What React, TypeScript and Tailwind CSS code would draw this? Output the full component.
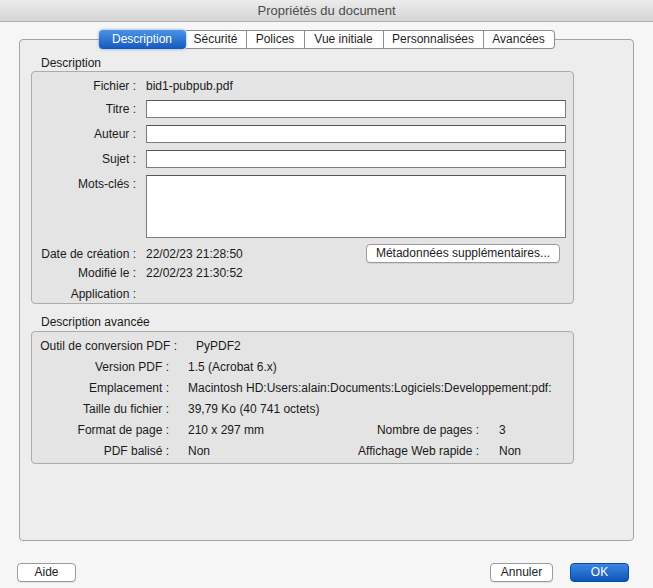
import React from 'react';

const tabs = [
  { label: 'Description', w: 'w-[87px]', active: true },
  { label: 'Sécurité', w: 'w-[61px]' },
  { label: 'Polices', w: 'w-[58px]' },
  { label: 'Vue initiale', w: 'w-[79px]' },
  { label: 'Personnalisées', w: 'w-[100px]' },
  { label: 'Avancées', w: 'w-[71px]' },
];

function Field({ label, children }: { label: string; children?: React.ReactNode }) {
  return (
    <div className="flex items-center h-[18px]">
      <div className="w-[104px] text-right shrink-0">{label}</div>
      <div className="ml-[10px] flex-1 min-w-0">{children}</div>
    </div>
  );
}

function Input({ tall }: { tall?: boolean }) {
  return (
    <div
      className={`${tall ? 'h-[63px]' : 'h-[18px]'} w-[420px] bg-white border border-[#7c7c7c] border-t-[#555]`}
    />
  );
}

function Button({ label, w, primary }: { label: string; w: string; primary?: boolean }) {
  if (primary) {
    return (
      <div className={`${w} h-[19px] rounded-[4px] bg-gradient-to-b from-[#3a86e4] to-[#0d56b8] border border-[#0b4c9e] text-white text-center leading-[17px]`}>
        {label}
      </div>
    );
  }
  return (
    <div className={`${w} h-[19px] rounded-[4px] bg-white border border-[#9b9b9b] text-[#222] text-center leading-[17px] shadow-[0_1px_0_rgba(0,0,0,0.08)]`}>
      {label}
    </div>
  );
}

export default function App() {
  return (
    <div
      className="w-[653px] h-[588px] bg-[#f6f6f6] flex flex-col text-[12px] text-[#1a1a1a] overflow-hidden"
      style={{ fontFamily: '"Liberation Sans", Arial, sans-serif' }}
    >
      {/* Title bar */}
      <div className="h-[22px] shrink-0 pt-[1px] bg-gradient-to-b from-[#ececec] to-[#d5d5d5] border-b border-[#b2b2b2] text-center text-[13px] leading-[20px] text-[#4b4b4b]">
        Propriétés du document
      </div>

      {/* Tab box */}
      <div className="ml-[19px] mt-[17px] w-[615px] h-[502px] bg-[#ededed] border border-[#a4a4a4] rounded-[4px] flex flex-col">
        <div className="-mt-[10px] flex justify-center">
          <div className="flex h-[19px]">
            {tabs.map((t, i) =>
              t.active ? (
                <div
                  key={t.label}
                  className={`${t.w} h-[19px] rounded-[4px] bg-gradient-to-b from-[#4a92e8] to-[#1459bb] text-white text-center leading-[19px] shadow-[0_0_3px_rgba(20,80,170,0.55)] relative z-10`}
                >
                  {t.label}
                </div>
              ) : (
                <div
                  key={t.label}
                  className={`${t.w} h-[19px] bg-white border-y border-[#8e8e8e] ${i < tabs.length - 1 ? 'border-r' : 'border-r rounded-r-[4px]'} text-center leading-[17px] text-[#1f1f1f]`}
                >
                  {t.label}
                </div>
              )
            )}
          </div>
        </div>

        <div className="px-[11px]">
          <div className="mt-[7px] ml-[10px] leading-[15px]">Description</div>

          {/* Description box */}
          <div className="w-[543px] h-[233px] bg-[#e4e4e4] border border-[#ababab] rounded-[4px] pt-[5px]">
            <Field label="Fichier :">bid1-pubpub.pdf</Field>
            <div className="mt-[5px] flex flex-col gap-[7px]">
              <Field label="Titre :"><Input /></Field>
              <Field label="Auteur :"><Input /></Field>
              <Field label="Sujet :"><Input /></Field>
            </div>
            <div className="mt-[7px] flex">
              <div className="w-[104px] text-right shrink-0 leading-[15px] pt-[2px]">Mots-clés :</div>
              <div className="ml-[10px]"><Input tall /></div>
            </div>
            <div className="mt-[6px] flex items-center h-[19px]">
              <div className="w-[104px] text-right shrink-0">Date de création :</div>
              <div className="ml-[10px] flex-1">22/02/23 21:28:50</div>
              <div className="mr-[13px]">
                <Button label="Métadonnées supplémentaires..." w="w-[194px]" />
              </div>
            </div>
            <div className="flex items-center h-[19px]">
              <div className="w-[104px] text-right shrink-0">Modifié le :</div>
              <div className="ml-[10px]">22/02/23 21:30:52</div>
            </div>
            <div className="mt-[2px] flex items-center h-[19px]">
              <div className="w-[104px] text-right shrink-0">Application :</div>
            </div>
          </div>

          <div className="mt-[11px] ml-[10px] leading-[15px]">Description avancée</div>

          {/* Advanced box */}
          <div className="mt-[1px] w-[543px] h-[133px] bg-[#e4e4e4] border border-[#ababab] rounded-[4px] pt-[3px]">
            <div className="flex items-center h-[21px]">
              <div className="w-[145px] text-right shrink-0">Outil de conversion PDF :</div>
              <div className="ml-[19px]">PyPDF2</div>
            </div>
            {[
              ['Version PDF :', '1.5 (Acrobat 6.x)'],
              ['Emplacement :', 'Macintosh HD:Users:alain:Documents:Logiciels:Developpement:pdf:'],
              ['Taille du fichier :', '39,79 Ko (40 741 octets)'],
            ].map(([l, v]) => (
              <div key={l} className="flex items-center h-[21px]">
                <div className="w-[137px] text-right shrink-0">{l}</div>
                <div className="ml-[19px] whitespace-nowrap">{v}</div>
              </div>
            ))}
            {[
              ['Format de page :', '210 x 297 mm', 'Nombre de pages :', '3'],
              ['PDF balisé :', 'Non', 'Affichage Web rapide :', 'Non'],
            ].map(([l, v, rl, rv]) => (
              <div key={l} className="flex items-center h-[21px]">
                <div className="w-[137px] text-right shrink-0">{l}</div>
                <div className="ml-[19px] w-[160px]">{v}</div>
                <div className="w-[131px] text-right">{rl}</div>
                <div className="ml-[20px]">{rv}</div>
              </div>
            ))}
          </div>
        </div>
      </div>

      {/* Bottom buttons */}
      <div className="mt-[22px] pl-[17px] pr-[24px] flex items-center">
        <Button label="Aide" w="w-[59px]" />
        <div className="flex-1" />
        <Button label="Annuler" w="w-[63px]" />
        <div className="ml-[17px]">
          <Button label="OK" w="w-[59px]" primary />
        </div>
      </div>
    </div>
  );
}
